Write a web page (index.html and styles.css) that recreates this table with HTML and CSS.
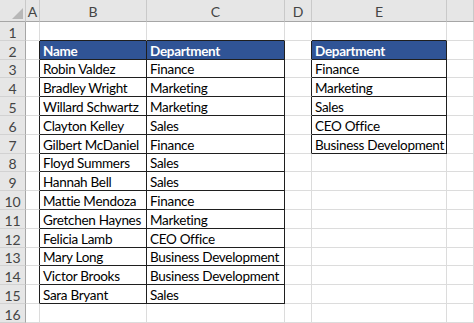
FILE: index.html
```html
<!DOCTYPE html>
<html>
<head>
<meta charset="utf-8">
<link rel="stylesheet" href="styles.css">
</head>
<body>
<div class="sheet">
  <div class="corner"><span class="tri"></span></div><div class="ch">A</div><div class="ch">B</div><div class="ch">C</div><div class="ch">D</div><div class="ch">E</div><div class="ch"></div>

  <div class="rh">1</div><div class="c"></div><div class="c top"></div><div class="c top"></div><div class="c"></div><div class="c top"></div><div class="c"></div>

  <div class="rh">2</div><div class="c tl"></div><div class="c th">Name</div><div class="c th">Department</div><div class="c tl"></div><div class="c th">Department</div><div class="c"></div>

  <div class="rh">3</div><div class="c tl"></div><div class="c t">Robin Valdez</div><div class="c t">Finance</div><div class="c tl"></div><div class="c t">Finance</div><div class="c"></div>
  <div class="rh">4</div><div class="c tl"></div><div class="c t">Bradley Wright</div><div class="c t">Marketing</div><div class="c tl"></div><div class="c t">Marketing</div><div class="c"></div>
  <div class="rh">5</div><div class="c tl"></div><div class="c t">Willard Schwartz</div><div class="c t">Marketing</div><div class="c tl"></div><div class="c t">Sales</div><div class="c"></div>
  <div class="rh">6</div><div class="c tl"></div><div class="c t">Clayton Kelley</div><div class="c t">Sales</div><div class="c tl"></div><div class="c t">CEO Office</div><div class="c"></div>
  <div class="rh">7</div><div class="c tl"></div><div class="c t">Gilbert McDaniel</div><div class="c t">Finance</div><div class="c tl"></div><div class="c t">Business Development</div><div class="c"></div>
  <div class="rh">8</div><div class="c tl"></div><div class="c t">Floyd Summers</div><div class="c t">Sales</div><div class="c"></div><div class="c"></div><div class="c"></div>
  <div class="rh">9</div><div class="c tl"></div><div class="c t">Hannah Bell</div><div class="c t">Sales</div><div class="c"></div><div class="c"></div><div class="c"></div>
  <div class="rh">10</div><div class="c tl"></div><div class="c t">Mattie Mendoza</div><div class="c t">Finance</div><div class="c"></div><div class="c"></div><div class="c"></div>
  <div class="rh">11</div><div class="c tl"></div><div class="c t">Gretchen Haynes</div><div class="c t">Marketing</div><div class="c"></div><div class="c"></div><div class="c"></div>
  <div class="rh">12</div><div class="c tl"></div><div class="c t">Felicia Lamb</div><div class="c t">CEO Office</div><div class="c"></div><div class="c"></div><div class="c"></div>
  <div class="rh">13</div><div class="c tl"></div><div class="c t">Mary Long</div><div class="c t">Business Development</div><div class="c"></div><div class="c"></div><div class="c"></div>
  <div class="rh">14</div><div class="c tl"></div><div class="c t">Victor Brooks</div><div class="c t">Business Development</div><div class="c"></div><div class="c"></div><div class="c"></div>
  <div class="rh">15</div><div class="c tl"></div><div class="c t">Sara Bryant</div><div class="c t">Sales</div><div class="c"></div><div class="c"></div><div class="c"></div>
  <div class="rh">16</div><div class="c"></div><div class="c"></div><div class="c"></div><div class="c"></div><div class="c"></div><div class="c"></div>
</div>
</body>
</html>
```

FILE: styles.css
```css
html, body {
  margin: 0;
  padding: 0;
  background: #ffffff;
}
body {
  width: 474px;
  height: 323px;
  overflow: hidden;
  font-family: Lato, "Open Sans", sans-serif;
}
.sheet {
  display: grid;
  grid-template-columns: 26px 14px 107px 138px 27px 135px 1fr;
  grid-template-rows: 22px repeat(16, 18.8px);
  width: 474px;
}
.sheet > div {
  box-sizing: border-box;
  border-right: 1px solid #dcdcdc;
  border-bottom: 1px solid #dcdcdc;
  white-space: nowrap;
  font-size: 13.5px;
  letter-spacing: -0.3px;
  color: #000;
}
.corner {
  position: relative;
  background: #e6e6e6;
  border-right-color: #c9c9c9 !important;
  border-bottom-color: #a6a6a6 !important;
}
.tri {
  position: absolute;
  right: 2px;
  bottom: 2px;
  width: 0;
  height: 0;
  border-left: 11px solid transparent;
  border-bottom: 11px solid #b7b7b7;
}
.ch {
  background: #e6e6e6;
  border-right-color: #c9c9c9 !important;
  border-bottom-color: #a6a6a6 !important;
  display: flex;
  align-items: center;
  justify-content: center;
  color: #444 !important;
  font-size: 14px !important;
  letter-spacing: 0 !important;
  padding-top: 1px;
}
.rh {
  background: #e6e6e6;
  border-right-color: #a6a6a6 !important;
  border-bottom-color: #d2d2d2 !important;
  display: flex;
  align-items: flex-end;
  justify-content: center;
  color: #444 !important;
  font-size: 14px !important;
  letter-spacing: 0 !important;
  line-height: 15px;
}
.c {
  display: flex;
  align-items: flex-end;
  padding-left: 3px;
  line-height: 15px;
}
.top {
  border-bottom-color: #1f1f1f !important;
}
.tl {
  border-right-color: #1f1f1f !important;
}
.t {
  border-right-color: #1f1f1f !important;
  border-bottom-color: #1f1f1f !important;
}
.th {
  background: #305496;
  color: #fff !important;
  font-weight: 700;
  border-right-color: #1f1f1f !important;
  border-bottom-color: #1f1f1f !important;
}
```
